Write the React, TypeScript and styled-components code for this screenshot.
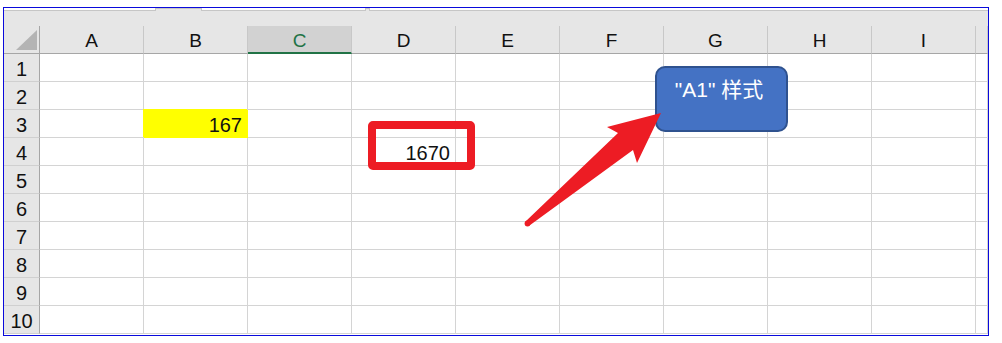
import React from "react";
import styled, { createGlobalStyle, css } from "styled-components";

const GlobalStyle = createGlobalStyle`
  html, body { margin: 0; padding: 0; background: #fff; }
  body { font-family: "Liberation Sans", "Noto Sans CJK SC", Arial, sans-serif; }
`;

const COLS = ["A", "B", "C", "D", "E", "F", "G", "H", "I"];
const ROWS = [1, 2, 3, 4, 5, 6, 7, 8, 9, 10];
const ACTIVE_COL = "C";

// cell contents and fills, keyed like the sheet
const values: Record<string, string> = { B3: "167", D4: "1670" };
const fills: Record<string, string> = { B3: "#ffff00" };

const Frame = styled.div`
  position: relative;
  box-sizing: border-box;
  width: 986px;
  height: 329px;
  margin: 7px 0 0 3px;
  border: 1px solid #0a0adc;
  overflow: hidden;
  background: #fff;
`;

const TopStrip = styled.div`
  display: flex;
  align-items: flex-end;
  height: 18px;
`;

const StripSeg = styled.div<{ $w?: number }>`
  ${(p) => (p.$w ? `width: ${p.$w}px; flex: none;` : `flex: 1;`)}
  height: 16px;
  box-sizing: border-box;
  border-top: 1px solid #c6c6c6;
  background: #e6e6e6;
`;

const StripTab = styled.div<{ $w: number }>`
  width: ${(p) => p.$w}px;
  flex: none;
  height: 18px;
  display: flex;
  flex-direction: column;
  background: #e6e6e6;
  &::before {
    content: "";
    height: 3px;
    box-sizing: border-box;
    border: 1px solid #c6c6c6;
    border-bottom: none;
  }
`;

const GridRow = styled.div`
  display: flex;
  height: 28px;
`;

const HeaderRow = styled(GridRow)`
  background: #e6e6e6;
`;

const Corner = styled.div`
  width: 36px;
  flex: none;
  box-sizing: border-box;
  border-right: 1px solid #a6a6a6;
  border-bottom: 1px solid #a6a6a6;
  display: flex;
  align-items: flex-end;
  justify-content: flex-end;
  padding: 0 2px 3px 0;
`;

const ColHead = styled.div<{ $active?: boolean; $rest?: boolean }>`
  ${(p) => (p.$rest ? `flex: 1;` : `width: 104px; flex: none;`)}
  box-sizing: border-box;
  border-right: 1px solid #c8c8c8;
  border-bottom: 1px solid #a6a6a6;
  display: flex;
  align-items: center;
  justify-content: center;
  padding-top: 3px;
  font-size: 19px;
  color: #111;
  ${(p) =>
    p.$active &&
    css`
      background: #d2d2d2;
      color: #217346;
      border-bottom: 2px solid #217346;
    `}
`;

const RowHead = styled.div`
  width: 36px;
  flex: none;
  box-sizing: border-box;
  background: #e6e6e6;
  border-right: 1px solid #a6a6a6;
  border-bottom: 1px solid #d0d0d0;
  display: flex;
  align-items: center;
  justify-content: center;
  padding-top: 3px;
  font-size: 20px;
  color: #111;
`;

const Cell = styled.div<{ $fill?: string; $rest?: boolean }>`
  ${(p) => (p.$rest ? `flex: 1;` : `width: 104px; flex: none;`)}
  box-sizing: border-box;
  border-right: 1px solid #d4d4d4;
  border-bottom: 1px solid #d4d4d4;
  display: flex;
  align-items: center;
  justify-content: flex-end;
  padding: 3px 5px 0 0;
  font-size: 20px;
  color: #111;
  ${(p) =>
    p.$fill &&
    css`
      background: ${p.$fill};
      border-color: ${p.$fill};
      box-shadow: -1px -1px 0 0 ${p.$fill};
    `}
`;

const Highlight = styled.div`
  position: absolute;
  left: 364px;
  top: 113px;
  width: 107px;
  height: 49px;
  box-sizing: border-box;
  border: 8px solid #ed1c24;
  border-radius: 5px;
`;

const Callout = styled.div`
  position: absolute;
  left: 651px;
  top: 58px;
  width: 133px;
  height: 66px;
  box-sizing: border-box;
  background: #4472c4;
  border: 2px solid #2f528f;
  border-radius: 10px;
  color: #fff;
  font-size: 21px;
  line-height: 24px;
  text-align: center;
  padding: 10px 5px 0 0;
`;

const ArrowSvg = styled.svg`
  position: absolute;
  left: 516px;
  top: 100px;
`;

const CornerMark = () => (
  <svg width="21" height="20" viewBox="0 0 21 20">
    <polygon points="0,20 21,0 21,20" fill="#b4b4b4" />
  </svg>
);

export default function App() {
  return (
    <>
      <GlobalStyle />
      <Frame>
        <TopStrip>
          <StripSeg $w={151} />
          <StripTab $w={47} />
          <StripSeg $w={163} />
          <StripTab $w={5} />
          <StripSeg />
        </TopStrip>
        <HeaderRow>
          <Corner>
            <CornerMark />
          </Corner>
          {COLS.map((c) => (
            <ColHead key={c} $active={c === ACTIVE_COL}>
              {c}
            </ColHead>
          ))}
          <ColHead $rest />
        </HeaderRow>
        {ROWS.map((r) => (
          <GridRow key={r}>
            <RowHead>{r}</RowHead>
            {COLS.map((c) => (
              <Cell key={c} $fill={fills[c + r]}>
                {values[c + r]}
              </Cell>
            ))}
            <Cell $rest />
          </GridRow>
        ))}

        <Highlight />
        <Callout>"A1" 样式</Callout>
        <ArrowSvg width="146" height="122" viewBox="0 0 146 122">
          <polygon
            points="5.5,113.5 98,25 87,19 141,5 117,55 113,42 9.5,117.5"
            fill="#ed1c24"
          />
          <circle cx="7.5" cy="115.5" r="2.9" fill="#ed1c24" />
        </ArrowSvg>
      </Frame>
    </>
  );
}
